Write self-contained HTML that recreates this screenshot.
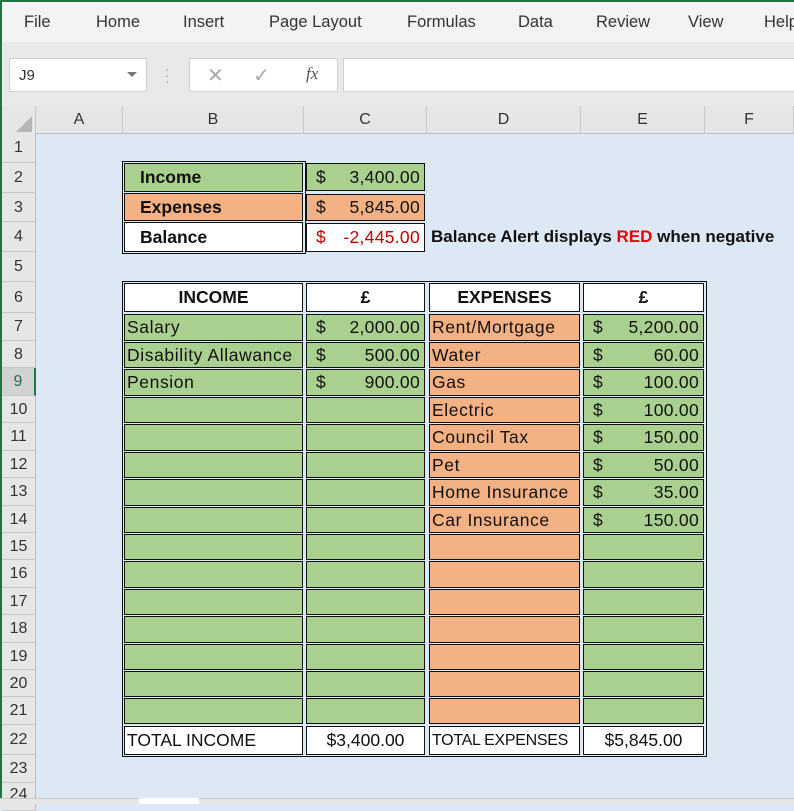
<!DOCTYPE html>
<html><head><meta charset="utf-8"><style>
*{margin:0;padding:0;box-sizing:border-box}
body{width:794px;height:804px;overflow:hidden;background:#dce9f5;font-family:"Liberation Sans",Arial,sans-serif;position:relative;color:#111}
.a{position:absolute}
.menu{left:0;top:0;width:794px;height:42px;background:#f3f3f3;border-top:2px solid #217346}
.menu span{position:absolute;top:11px;font-size:16.5px;color:#333}
.band{left:0;top:42px;width:794px;height:64px;background:#e9e9e9}
.rh{left:2px;width:34px;background:#e6e6e6;border-bottom:1px solid #c8c8c8;border-right:1px solid #bdbdbd;font-size:16px;color:#333;text-align:center}
.ch{top:106px;height:28px;background:#e6e6e6;border-right:1px solid #c8c8c8;border-bottom:1px solid #bdbdbd;font-size:16px;color:#333;text-align:center;line-height:27px}
.c{position:absolute;border:1.5px solid #111;font-size:17.5px;letter-spacing:0.6px;white-space:nowrap;overflow:hidden;padding:0 2px;display:flex;align-items:center}
.g{background:#a9d08e}.o{background:#f4b183}.w{background:#fff}
.m{justify-content:space-between;padding:0 4px 0 9px;letter-spacing:0.3px}
.ctr{justify-content:center}
.b{font-weight:bold;letter-spacing:0}
.box{position:absolute;border:1.5px solid #111}
</style></head><body>
<div class="a menu">
<span style="left:24px">File</span><span style="left:96px">Home</span><span style="left:183px">Insert</span><span style="left:269px">Page Layout</span><span style="left:407px">Formulas</span><span style="left:518px">Data</span><span style="left:596px">Review</span><span style="left:688px">View</span><span style="left:764px">Help</span>
</div>
<div class="a band"></div>
<div class="a" style="left:9px;top:58px;width:138px;height:34px;background:#fff;border:1px solid #d0d0d0;font-size:15px;padding:8px 9px;color:#333">J9<span style="position:absolute;right:9px;top:13px;border:5px solid transparent;border-top:5px solid #777"></span></div>
<div class="a" style="left:165px;top:66px;color:#aaa;font-size:14px;line-height:6px">·<br>·<br>·</div>
<div class="a" style="left:189px;top:58px;width:149px;height:34px;background:#fff;border:1px solid #d0d0d0;color:#aaa;font-size:20px"><span class="a" style="left:17px;top:4px">✕</span><span class="a" style="left:63px;top:4px">✓</span><span class="a" style="left:116px;top:5px;color:#555;font-style:italic;font-family:'Liberation Serif',serif;font-size:17px">fx</span></div>
<div class="a" style="left:343px;top:58px;width:460px;height:34px;background:#fff;border:1px solid #d0d0d0"></div>
<div class="a" style="left:0;top:0;width:2px;height:804px;background:#217346"></div>
<!-- column headers -->
<div class="a ch" style="left:2px;width:34px;background:#e6e6e6"><span style="position:absolute;left:14px;top:10px;border:8px solid transparent;border-right:8px solid #b5b5b5;border-bottom:8px solid #b5b5b5"></span></div>
<div class="a ch" style="left:36px;width:87px">A</div>
<div class="a ch" style="left:123px;width:181px">B</div>
<div class="a ch" style="left:304px;width:123px">C</div>
<div class="a ch" style="left:427px;width:154px">D</div>
<div class="a ch" style="left:581px;width:124px">E</div>
<div class="a ch" style="left:705px;width:89px">F</div>
<!-- row headers -->
<div class="a rh" style="top:133px;height:30px;line-height:30px">1</div>
<div class="a rh" style="top:163px;height:30px;line-height:30px">2</div>
<div class="a rh" style="top:193px;height:29px;line-height:29px">3</div>
<div class="a rh" style="top:222px;height:30px;line-height:30px">4</div>
<div class="a rh" style="top:252px;height:30px;line-height:30px">5</div>
<div class="a rh" style="top:282px;height:31px;line-height:31px">6</div>
<div class="a rh" style="top:313px;height:28px;line-height:28px">7</div>
<div class="a rh" style="top:341px;height:27px;line-height:27px">8</div>
<div class="a rh" style="top:368px;height:28px;line-height:28px;color:#217346;border-right:2px solid #217346;background:#d2d2d2">9</div>
<div class="a rh" style="top:396px;height:27px;line-height:27px">10</div>
<div class="a rh" style="top:423px;height:28px;line-height:28px">11</div>
<div class="a rh" style="top:451px;height:27px;line-height:27px">12</div>
<div class="a rh" style="top:478px;height:28px;line-height:28px">13</div>
<div class="a rh" style="top:506px;height:27px;line-height:27px">14</div>
<div class="a rh" style="top:533px;height:27px;line-height:27px">15</div>
<div class="a rh" style="top:560px;height:28px;line-height:28px">16</div>
<div class="a rh" style="top:588px;height:27px;line-height:27px">17</div>
<div class="a rh" style="top:615px;height:28px;line-height:28px">18</div>
<div class="a rh" style="top:643px;height:27px;line-height:27px">19</div>
<div class="a rh" style="top:670px;height:27px;line-height:27px">20</div>
<div class="a rh" style="top:697px;height:28px;line-height:28px">21</div>
<div class="a rh" style="top:725px;height:30px;line-height:30px">22</div>
<div class="a rh" style="top:755px;height:28px;line-height:28px">23</div>
<div class="a rh" style="top:783px;height:28px;line-height:24px">24</div>
<!-- summary -->
<div class="box" style="left:122px;top:161px;width:184px;height:93px"></div>
<div class="c g b" style="left:124px;top:163px;width:179px;height:29px;padding-left:15px">Income</div>
<div class="c o b" style="left:124px;top:193px;width:179px;height:28px;padding-left:15px">Expenses</div>
<div class="c w b" style="left:124px;top:222px;width:179px;height:30px;padding-left:15px">Balance</div>
<div class="c g m" style="left:306px;top:163px;width:119px;height:28px"><span>$</span><span>3,400.00</span></div>
<div class="c o m" style="left:306px;top:194px;width:119px;height:27px"><span>$</span><span>5,845.00</span></div>
<div class="c w m" style="left:306px;top:223px;width:119px;height:29px;color:#c00000"><span>$</span><span>-2,445.00</span></div>
<div class="a b" style="left:431px;top:227px;font-size:17px">Balance Alert displays <span style="color:#e00">RED</span> when negative</div>
<!-- main table -->
<div class="box" style="left:122px;top:281px;width:585px;height:476px"></div>
<div class="c w b ctr" style="left:124px;top:283px;width:179px;height:29px">INCOME</div>
<div class="c w b ctr" style="left:306px;top:283px;width:119px;height:29px">£</div>
<div class="c w b ctr" style="left:429px;top:283px;width:151px;height:29px">EXPENSES</div>
<div class="c w b ctr" style="left:583px;top:283px;width:121px;height:29px">£</div>

<div class="c g" style="left:124px;top:314px;width:179px;height:27px">Salary</div>
<div class="c g m" style="left:306px;top:314px;width:119px;height:27px"><span>$</span><span>2,000.00</span></div>
<div class="c o" style="left:429px;top:314px;width:151px;height:27px">Rent/Mortgage</div>
<div class="c g m" style="left:583px;top:314px;width:121px;height:27px"><span>$</span><span>5,200.00</span></div>

<div class="c g" style="left:124px;top:342px;width:179px;height:26px">Disability Allawance</div>
<div class="c g m" style="left:306px;top:342px;width:119px;height:26px"><span>$</span><span>500.00</span></div>
<div class="c o" style="left:429px;top:342px;width:151px;height:26px">Water</div>
<div class="c g m" style="left:583px;top:342px;width:121px;height:26px"><span>$</span><span>60.00</span></div>

<div class="c g" style="left:124px;top:369px;width:179px;height:27px">Pension</div>
<div class="c g m" style="left:306px;top:369px;width:119px;height:27px"><span>$</span><span>900.00</span></div>
<div class="c o" style="left:429px;top:369px;width:151px;height:27px">Gas</div>
<div class="c g m" style="left:583px;top:369px;width:121px;height:27px"><span>$</span><span>100.00</span></div>

<div class="c g" style="left:124px;top:397px;width:179px;height:26px"></div>
<div class="c g" style="left:306px;top:397px;width:119px;height:26px"></div>
<div class="c o" style="left:429px;top:397px;width:151px;height:26px">Electric</div>
<div class="c g m" style="left:583px;top:397px;width:121px;height:26px"><span>$</span><span>100.00</span></div>

<div class="c g" style="left:124px;top:424px;width:179px;height:27px"></div>
<div class="c g" style="left:306px;top:424px;width:119px;height:27px"></div>
<div class="c o" style="left:429px;top:424px;width:151px;height:27px">Council Tax</div>
<div class="c g m" style="left:583px;top:424px;width:121px;height:27px"><span>$</span><span>150.00</span></div>

<div class="c g" style="left:124px;top:452px;width:179px;height:26px"></div>
<div class="c g" style="left:306px;top:452px;width:119px;height:26px"></div>
<div class="c o" style="left:429px;top:452px;width:151px;height:26px">Pet</div>
<div class="c g m" style="left:583px;top:452px;width:121px;height:26px"><span>$</span><span>50.00</span></div>

<div class="c g" style="left:124px;top:479px;width:179px;height:27px"></div>
<div class="c g" style="left:306px;top:479px;width:119px;height:27px"></div>
<div class="c o" style="left:429px;top:479px;width:151px;height:27px">Home Insurance</div>
<div class="c g m" style="left:583px;top:479px;width:121px;height:27px"><span>$</span><span>35.00</span></div>

<div class="c g" style="left:124px;top:507px;width:179px;height:26px"></div>
<div class="c g" style="left:306px;top:507px;width:119px;height:26px"></div>
<div class="c o" style="left:429px;top:507px;width:151px;height:26px">Car Insurance</div>
<div class="c g m" style="left:583px;top:507px;width:121px;height:26px"><span>$</span><span>150.00</span></div>

<div class="c g" style="left:124px;top:534px;width:179px;height:26px"></div><div class="c g" style="left:306px;top:534px;width:119px;height:26px"></div><div class="c o" style="left:429px;top:534px;width:151px;height:26px"></div><div class="c g" style="left:583px;top:534px;width:121px;height:26px"></div>
<div class="c g" style="left:124px;top:561px;width:179px;height:27px"></div><div class="c g" style="left:306px;top:561px;width:119px;height:27px"></div><div class="c o" style="left:429px;top:561px;width:151px;height:27px"></div><div class="c g" style="left:583px;top:561px;width:121px;height:27px"></div>
<div class="c g" style="left:124px;top:589px;width:179px;height:26px"></div><div class="c g" style="left:306px;top:589px;width:119px;height:26px"></div><div class="c o" style="left:429px;top:589px;width:151px;height:26px"></div><div class="c g" style="left:583px;top:589px;width:121px;height:26px"></div>
<div class="c g" style="left:124px;top:616px;width:179px;height:27px"></div><div class="c g" style="left:306px;top:616px;width:119px;height:27px"></div><div class="c o" style="left:429px;top:616px;width:151px;height:27px"></div><div class="c g" style="left:583px;top:616px;width:121px;height:27px"></div>
<div class="c g" style="left:124px;top:644px;width:179px;height:26px"></div><div class="c g" style="left:306px;top:644px;width:119px;height:26px"></div><div class="c o" style="left:429px;top:644px;width:151px;height:26px"></div><div class="c g" style="left:583px;top:644px;width:121px;height:26px"></div>
<div class="c g" style="left:124px;top:671px;width:179px;height:26px"></div><div class="c g" style="left:306px;top:671px;width:119px;height:26px"></div><div class="c o" style="left:429px;top:671px;width:151px;height:26px"></div><div class="c g" style="left:583px;top:671px;width:121px;height:26px"></div>
<div class="c g" style="left:124px;top:698px;width:179px;height:26px"></div><div class="c g" style="left:306px;top:698px;width:119px;height:26px"></div><div class="c o" style="left:429px;top:698px;width:151px;height:26px"></div><div class="c g" style="left:583px;top:698px;width:121px;height:26px"></div>

<div class="c w" style="left:124px;top:726px;width:179px;height:29px;letter-spacing:0">TOTAL INCOME</div>
<div class="c w ctr" style="left:306px;top:726px;width:119px;height:29px;letter-spacing:0">$3,400.00</div>
<div class="c w" style="left:429px;top:726px;width:151px;height:29px;letter-spacing:-0.3px;font-size:16px">TOTAL EXPENSES</div>
<div class="c w ctr" style="left:583px;top:726px;width:121px;height:29px;letter-spacing:0">$5,845.00</div>

<div class="a" style="left:0;top:798px;width:794px;height:6px;background:#e6e6e6;border-top:1px solid #c8c8c8"></div>
<div class="a" style="left:139px;top:798px;width:60px;height:6px;background:#fff"></div>
</body></html>
